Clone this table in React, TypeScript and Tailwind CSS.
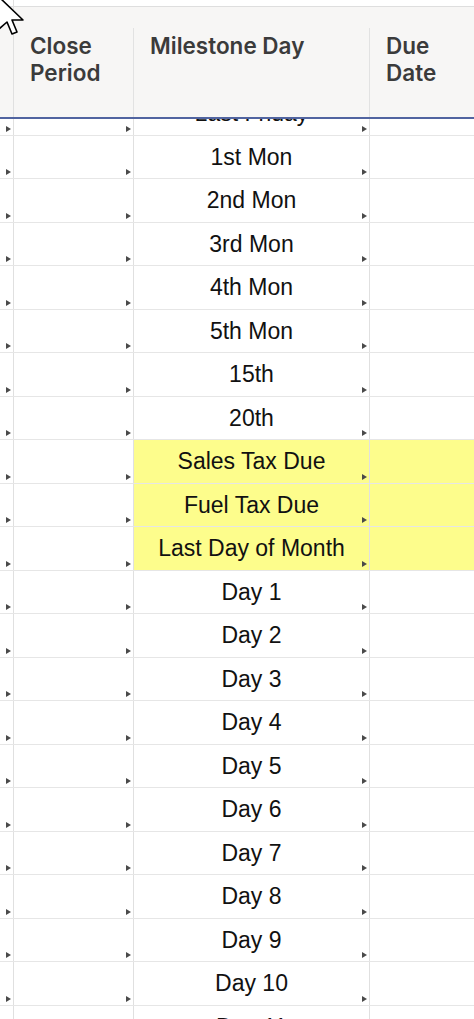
import React from "react";

const rows: { label: string; highlight?: boolean }[] = [
  { label: "Last Friday" },
  { label: "1st Mon" },
  { label: "2nd Mon" },
  { label: "3rd Mon" },
  { label: "4th Mon" },
  { label: "5th Mon" },
  { label: "15th" },
  { label: "20th" },
  { label: "Sales Tax Due", highlight: true },
  { label: "Fuel Tax Due", highlight: true },
  { label: "Last Day of Month", highlight: true },
  ...Array.from({ length: 11 }, (_, i) => ({ label: `Day ${i + 1}` })),
];

function Marker() {
  return (
    <span className="absolute right-[2px] bottom-[3px] w-0 h-0 border-y-[3.5px] border-y-transparent border-l-[5px] border-l-[#4a4a4a]" />
  );
}

function HeaderCell({ lines, width }: { lines: string[]; width?: string }) {
  return (
    <div className={`flex ${width ?? "flex-1"}`}>
      <div className="flex-1 pl-4 pt-[25px] text-[22.5px] leading-[27px] font-semibold text-[#3b3b3b] font-['Inter',sans-serif]">
        {lines.map((l) => (
          <div key={l}>{l}</div>
        ))}
      </div>
      {width && <div className="w-px mt-[21px] bg-[#e2e2e2]" />}
    </div>
  );
}

export default function App() {
  return (
    <div className="relative w-[474px] h-[1019px] overflow-hidden bg-white flex flex-col">
      {/* header */}
      <div className="flex h-[119px] shrink-0 border-b-2 border-[#5164a0]">
        <div className="w-[14px] shrink-0 border-r border-[#e0e0e0] flex flex-col">
          <div className="h-[7px] bg-white border-b border-[#dedede]" />
          <div className="flex-1 bg-[#f7f6f5]" />
        </div>
        <div className="flex-1 flex flex-col">
          <div className="h-[7px] bg-white border-b border-[#dedede]" />
          <div className="flex-1 flex bg-[#f7f6f5]">
            <HeaderCell lines={["Close", "Period"]} width="w-[120px]" />
            <HeaderCell lines={["Milestone Day"]} width="w-[236px]" />
            <HeaderCell lines={["Due", "Date"]} />
          </div>
        </div>
      </div>

      {/* body */}
      <div className="flex-1 overflow-hidden">
        <div className="-mt-[27px]">
          {rows.map((r) => (
            <div key={r.label} className="flex h-[43.5px] border-b border-[#e6e6e6] font-['Liberation_Sans',Arial,sans-serif] text-[23px] text-[#111]">
              <div className="relative w-[14px] shrink-0 border-r border-[#e0e0e0]">
                <Marker />
              </div>
              <div className="relative w-[120px] shrink-0 border-r border-[#e0e0e0]">
                <Marker />
              </div>
              <div
                className={`relative w-[236px] shrink-0 border-r border-[#e0e0e0] flex items-center justify-center ${
                  r.highlight ? "bg-[#fdfd8c]" : ""
                }`}
              >
                {r.label}
                <Marker />
              </div>
              <div className={`flex-1 ${r.highlight ? "bg-[#fdfd8c]" : ""}`} />
            </div>
          ))}
        </div>
      </div>

      {/* mouse pointer */}
      <svg
        className="absolute left-[-2px] top-[-4px]"
        width="28"
        height="42"
        viewBox="0 0 28 42"
      >
        <path
          d="M1 1 L1 33 L9 26 L14 38 L19 36 L14 24 L25 24 Z"
          fill="#fff"
          stroke="#000"
          strokeWidth="1.6"
          strokeLinejoin="round"
        />
      </svg>
    </div>
  );
}
